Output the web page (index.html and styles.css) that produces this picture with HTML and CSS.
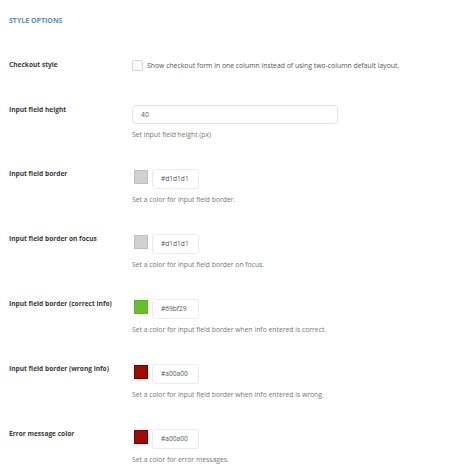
FILE: index.html
```
<!DOCTYPE html>
<html lang="en">
<head>
    <meta charset="UTF-8">
    <meta name="viewport" content="width=device-width, initial-scale=1.0">
    <title>Style options</title>
    <link rel="stylesheet" href="styles.css">
</head>
<body>
    <div class="options">
        <h3 class="options-title">Style Options</h3>

        <div class="opt-row opt-first">
            <div class="opt-label">Checkout style</div>
            <div class="opt-field">
                <label class="check">
                    <span class="check-box"></span>
                    Show checkout form in one column instead of using two-column default layout.
                </label>
            </div>
        </div>

        <div class="opt-row">
            <div class="opt-label">Input field height</div>
            <div class="opt-field">
                <div class="text-input">40</div>
                <p class="opt-help">Set input field height (px)</p>
            </div>
        </div>

        <div class="opt-row">
            <div class="opt-label">Input field border</div>
            <div class="opt-field">
                <div class="color-pick">
                    <span class="swatch swatch-grey"></span>
                    <span class="color-input">#d1d1d1</span>
                </div>
                <p class="opt-help">Set a color for input field border.</p>
            </div>
        </div>

        <div class="opt-row">
            <div class="opt-label">Input field border on focus</div>
            <div class="opt-field">
                <div class="color-pick">
                    <span class="swatch swatch-grey"></span>
                    <span class="color-input">#d1d1d1</span>
                </div>
                <p class="opt-help">Set a color for input field border on focus.</p>
            </div>
        </div>

        <div class="opt-row">
            <div class="opt-label">Input field border (correct info)</div>
            <div class="opt-field">
                <div class="color-pick">
                    <span class="swatch swatch-green"></span>
                    <span class="color-input">#69bf29</span>
                </div>
                <p class="opt-help">Set a color for input field border when info entered is correct.</p>
            </div>
        </div>

        <div class="opt-row">
            <div class="opt-label">Input field border (wrong info)</div>
            <div class="opt-field">
                <div class="color-pick">
                    <span class="swatch swatch-red"></span>
                    <span class="color-input">#a00a00</span>
                </div>
                <p class="opt-help">Set a color for input field border when info entered is wrong.</p>
            </div>
        </div>

        <div class="opt-row">
            <div class="opt-label">Error message color</div>
            <div class="opt-field">
                <div class="color-pick">
                    <span class="swatch swatch-red"></span>
                    <span class="color-input">#a00a00</span>
                </div>
                <p class="opt-help">Set a color for error messages.</p>
            </div>
        </div>
    </div>
</body>
</html>
```

FILE: styles.css
```
html,
body{
    margin:0;
    padding:0;
    background:#ffffff;
}
body{
    font-family:"Open Sans","Noto Sans",sans-serif;
    color:#333333;
}
.options{
    padding:15px 0 0 9px;
}
.options-title{
    margin:0 0 33px 0;
    font-size:7px;
    line-height:12px;
    font-weight:700;
    text-transform:uppercase;
    color:#5590b6;
}
.opt-row{
    display:flex;
    align-items:flex-start;
    margin-bottom:29px;
}
.opt-first{
    margin-bottom:34px;
}
.opt-label{
    width:123px;
    flex-shrink:0;
    font-size:6.6px;
    line-height:10px;
    font-weight:700;
    color:#3a3a3a;
}
.opt-field{
    flex:1;
}
.opt-help{
    margin:6px 0 0 0;
    font-size:6.8px;
    line-height:10px;
    color:#777777;
}

/* checkbox */
.check{
    display:flex;
    align-items:center;
    gap:4px;
    font-size:6.85px;
    line-height:11px;
    color:#555555;
}
.check-box{
    width:11px;
    height:11px;
    flex-shrink:0;
    box-sizing:border-box;
    border:1px solid #d4d4d4;
    border-radius:2px;
    background:#ffffff;
}

/* text input */
.text-input{
    width:206px;
    height:19px;
    box-sizing:border-box;
    padding-left:8px;
    border:1px solid #e2e2e2;
    border-radius:4px;
    font-size:6.8px;
    line-height:17px;
    color:#555555;
}

/* color picker */
.color-pick{
    display:flex;
    align-items:flex-start;
    gap:4px;
    padding-left:2px;
}
.swatch{
    width:14px;
    height:14px;
    margin-top:1px;
    box-sizing:border-box;
    border:1px solid rgba(0,0,0,.08);
}
.swatch-grey{
    background:#d1d1d1;
}
.swatch-green{
    background:#69bf29;
}
.swatch-red{
    background:#a00a00;
    border-color:#7a0000;
}
.color-input{
    width:47px;
    height:20px;
    box-sizing:border-box;
    padding-left:8px;
    border:1px solid #ebebeb;
    border-radius:3px;
    font-size:6.6px;
    line-height:18px;
    color:#555555;
}
```
